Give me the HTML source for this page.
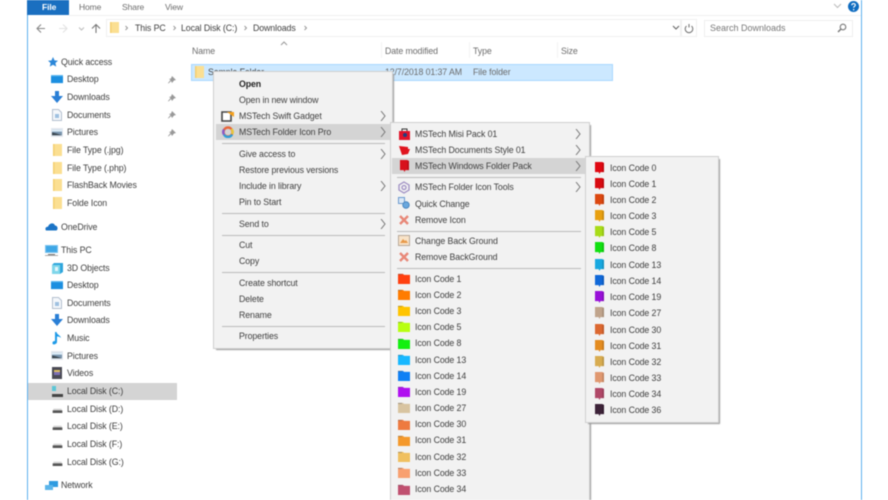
<!DOCTYPE html>
<html><head><meta charset="utf-8"><style>
html,body{margin:0;padding:0;width:888px;height:500px;overflow:hidden;background:#fff}
#r{position:relative;width:888px;height:500px;overflow:hidden;font:8.8px/16px "Liberation Sans",sans-serif;letter-spacing:-.1px;color:#404040;filter:blur(.45px)}
#r div,#r span,#r svg{position:absolute}
.t{white-space:nowrap;height:16px}
.g{color:#6c6c6c}
.m{background:#f2f2f2;box-shadow:2px 2px 1px #999;outline:1px solid #d0d0d0}
.s{height:1px;background:#bcbcbc}
.h{background:#d4d4d4}
.c{width:6px;height:10px;fill:none;stroke:#777;stroke-width:1}
.b{font-weight:bold;color:#222}
</style></head><body><div id="r">
<svg width="0" height="0"><defs>
<symbol id="fd" viewBox="0 0 12 12" preserveAspectRatio="none"><path d="M0 1h5l1 1h6v10H0z" fill="currentColor"/><path d="M0 1h4v1H0z" fill="#555" opacity=".45"/></symbol>
<symbol id="bk" viewBox="0 0 10 13" preserveAspectRatio="none"><path d="M0 0h8l2 1v10H6l-1 2-1-2H0z" fill="currentColor"/><path d="M8 1h2v10H8z" fill="#000" opacity=".12"/></symbol>
<symbol id="yf" viewBox="0 0 9 12" preserveAspectRatio="none"><path d="M0 0h9v12H0z" fill="#fbdf92"/><path d="M0 0h1.500v12H0z" fill="#f4cf70"/></symbol>
<symbol id="dr" viewBox="0 0 11 8"><path d="M1 3h9l1 3v2H0V6z" fill="#d8d8d8"/><path d="M0 5h11v3H0z" fill="#555"/></symbol>
<symbol id="ds" viewBox="0 0 12 10" preserveAspectRatio="none"><path d="M0 0h12v9H0z" fill="#1c8fe0"/><path d="M0 0h12v1.400H0z" fill="#60b8f0"/></symbol>
<symbol id="dn" viewBox="0 0 12 12"><path d="M4 0h4v5h4l-6 7-6-7h4z" fill="#2a7fd6"/></symbol>
<symbol id="dc" viewBox="0 0 10 12"><path d="M.5.500h6l3 3v8h-9z" fill="#f4f7fb" stroke="#b4c0cf"/><path d="M3 5h4v4H3z" fill="#9fc0e0"/></symbol>
<symbol id="pc" viewBox="0 0 12 10" preserveAspectRatio="none"><path d="M0 0h12v10H0z" fill="#e3e8ef"/><path d="M1 2h10v6H1z" fill="#7a95ae"/><path d="M1 5l4 1 6 2H1z" fill="#39454f"/><path d="M1 2h10v2H1z" fill="#dff0fb"/></symbol>
<symbol id="pn" viewBox="0 0 8 8"><path d="M4 0l4 4-2 .5L4 7 3 5 .5 7.500 0 7l2.500-3L1 3l2-.5z" fill="#999"/></symbol>
</defs></svg>

<!-- window borders -->
<div style="left:27px;top:0;width:1px;height:500px;background:#5cb0ee"></div>
<div style="left:861px;top:0;width:1px;height:500px;background:#5cb0ee"></div>

<!-- ribbon -->
<div style="left:27px;top:0;width:42px;height:15px;background:#1a6fc0"></div>
<div class="t" style="left:42px;top:-1px;color:#fff;font-weight:bold;font-size:8.500px">File</div>
<div class="t g" style="left:79px;top:-1px;font-size:8.500px">Home</div>
<div class="t g" style="left:122px;top:-1px;font-size:8.500px">Share</div>
<div class="t g" style="left:165px;top:-1px;font-size:8.500px">View</div>
<div style="left:69px;top:15px;width:792px;height:1px;background:#f0f0f0"></div>
<svg style="left:833px;top:3px" width="9" height="6"><path d="M1 1l3.500 3.500L8 1" fill="none" stroke="#bbb"/></svg>
<svg style="left:848px;top:1px" width="11" height="11"><circle cx="5.500" cy="5.500" r="5.500" fill="#0f6cc0"/><path d="M3.800 4.300c0-2.300 3.500-2.300 3.500-.2 0 1.200-1.700 1.300-1.700 2.600" fill="none" stroke="#fff" stroke-width="1.200"/><path d="M5 8h1.300v1.300H5z" fill="#fff"/></svg>

<!-- nav -->
<svg style="left:36px;top:23px" width="74" height="11" fill="none"><path d="M1 5.500h8M5 1.500l-4 4 4 4" stroke="#888" stroke-width="1.100"/><path d="M23 5.500h8M27 1.500l4 4-4 4" stroke="#e2e2e2" stroke-width="1.100"/><path d="M43 4.500l2.500 2.500L48 4.500" stroke="#bbb"/><path d="M60 10V2M56 5.500l4-4 4 4" stroke="#777" stroke-width="1.100"/></svg>
<div style="left:106px;top:19px;width:574px;height:16px;border:1px solid #f0f0f0"></div>
<div style="left:680px;top:19px;width:15px;height:16px;border:1px solid #f0f0f0"></div>
<svg style="left:110px;top:22px" width="9" height="11"><use href="#yf" width="9" height="11"/></svg>
<svg style="left:124px;top:24px" width="190" height="8" fill="none" stroke="#999"><path d="M1.500 2l2 2-2 2M49.500 2l2 2-2 2M120.500 2l2 2-2 2M180.500 2l2 2-2 2"/></svg>
<div class="t" style="left:135px;top:20px">This PC</div>
<div class="t" style="left:181px;top:20px">Local Disk (C:)</div>
<div class="t" style="left:253px;top:20px">Downloads</div>
<svg style="left:672px;top:25px" width="8" height="6"><path d="M1 1l3 3 3-3" fill="none" stroke="#666" stroke-width="1.100"/></svg>
<svg style="left:684px;top:23px" width="10" height="11"><path d="M2.500 3a3.800 3.800 0 1 0 5 0M5 1v3.500" fill="none" stroke="#777" stroke-width="1.100"/></svg>
<div style="left:704px;top:20px;width:147px;height:15px;border:1px solid #efefef"></div>
<div class="t" style="left:710px;top:20px;color:#777;font-size:9px;letter-spacing:0">Search Downloads</div>
<svg style="left:837px;top:23px" width="10" height="10"><circle cx="6" cy="4" r="2.800" fill="none" stroke="#777" stroke-width="1.100"/><path d="M4 6L1 9" stroke="#777" stroke-width="1.400"/></svg>

<!-- sidebar -->
<div class="h" style="left:28px;top:383px;width:149px;height:17px"></div>
<svg style="left:48px;top:57px" width="10" height="10"><path d="M5 0l1.500 3.400L10 3.700 7.400 6l.8 3.600L5 7.700 1.800 9.600 2.600 6 0 3.700l3.500-.3z" fill="#2b87d8"/></svg>
<div class="t" style="left:61px;top:54px">Quick access</div>
<svg style="left:51px;top:75px" width="12" height="9"><use href="#ds" width="12" height="9"/></svg><div class="t" style="left:67px;top:71px">Desktop</div>
<svg style="left:51px;top:91px" width="12" height="12"><use href="#dn" width="12" height="12"/></svg><div class="t" style="left:67px;top:89px">Downloads</div>
<svg style="left:52px;top:109px" width="10" height="12"><use href="#dc" width="10" height="12"/></svg><div class="t" style="left:67px;top:107px">Documents</div>
<svg style="left:51px;top:128px" width="12" height="9"><use href="#pc" width="12" height="9"/></svg><div class="t" style="left:67px;top:124px">Pictures</div>
<svg style="left:168px;top:76px" width="8" height="8"><use href="#pn" width="8" height="8"/></svg>
<svg style="left:168px;top:94px" width="8" height="8"><use href="#pn" width="8" height="8"/></svg>
<svg style="left:168px;top:111px" width="8" height="8"><use href="#pn" width="8" height="8"/></svg>
<svg style="left:168px;top:129px" width="8" height="8"><use href="#pn" width="8" height="8"/></svg>
<svg style="left:53px;top:144px" width="9" height="12"><use href="#yf" width="9" height="12"/></svg><div class="t" style="left:67px;top:142px">File Type (.jpg)</div>
<svg style="left:53px;top:162px" width="9" height="12"><use href="#yf" width="9" height="12"/></svg><div class="t" style="left:67px;top:160px">File Type (.php)</div>
<svg style="left:53px;top:179px" width="9" height="12"><use href="#yf" width="9" height="12"/></svg><div class="t" style="left:67px;top:177px">FlashBack Movies</div>
<svg style="left:53px;top:197px" width="9" height="12"><use href="#yf" width="9" height="12"/></svg><div class="t" style="left:67px;top:195px">Folde Icon</div>

<svg style="left:45px;top:222px" width="13" height="9"><path d="M1 8.500C-.500 6.500 1 4.500 3 4.800 4 1 9 0 10 3.500c2.500 0 3.500 3.500 1.500 5z" fill="#1b74c6"/></svg>
<div class="t" style="left:61px;top:219px">OneDrive</div>
<svg style="left:45px;top:245px" width="13" height="11"><path d="M0 0h13v8H0z" fill="#7cc4ee"/><path d="M1 1h11v6H1z" fill="#3fa7e6"/><path d="M3 9h7v1H3z" fill="#777"/><path d="M0 10h13v1H0z" fill="#aaa"/></svg>
<div class="t" style="left:61px;top:242px">This PC</div>
<svg style="left:51px;top:262px" width="12" height="12"><path d="M3 1h9v9l-3 2H1V3z" fill="#2fa6dc"/><path d="M1 3h8v9H1z" fill="#7fd6ea"/><path d="M4 5h3v4H4z" fill="#e4f6fb"/></svg>
<div class="t" style="left:67px;top:260px">3D Objects</div>
<svg style="left:51px;top:281px" width="12" height="9"><use href="#ds" width="12" height="9"/></svg><div class="t" style="left:67px;top:277px">Desktop</div>
<svg style="left:52px;top:297px" width="10" height="12"><use href="#dc" width="10" height="12"/></svg><div class="t" style="left:67px;top:295px">Documents</div>
<svg style="left:51px;top:314px" width="12" height="12"><use href="#dn" width="12" height="12"/></svg><div class="t" style="left:67px;top:312px">Downloads</div>
<svg style="left:52px;top:332px" width="10" height="13"><path d="M3 0h1.500c.5 3 4 3 4.500 6C7.500 4.500 6 4.500 5 4.500V10c0 2-4 3.500-4.500 1.500C.2 9.500 2 8.800 3 9z" fill="#1f9be8"/></svg>
<div class="t" style="left:67px;top:330px">Music</div>
<svg style="left:51px;top:351px" width="12" height="9"><use href="#pc" width="12" height="9"/></svg><div class="t" style="left:67px;top:348px">Pictures</div>
<svg style="left:52px;top:367px" width="10" height="12"><path d="M0 0h10v12H0z" fill="#4a4a55"/><path d="M2 3h6v5H2z" fill="#7d6fb5"/><path d="M2 3h6v2H2z" fill="#e0c060"/></svg>
<div class="t" style="left:67px;top:365px">Videos</div>
<svg style="left:51px;top:386px" width="12" height="11"><path d="M1 0h4v5H1z" fill="#5cc6d6"/><path d="M1 8h11v3H1z" fill="#444"/></svg>
<div class="t" style="left:67px;top:383px">Local Disk (C:)</div>
<svg style="left:52px;top:406px" width="11" height="7"><use href="#dr" width="11" height="7"/></svg><div class="t" style="left:67px;top:401px">Local Disk (D:)</div>
<svg style="left:52px;top:423px" width="11" height="7"><use href="#dr" width="11" height="7"/></svg><div class="t" style="left:67px;top:418px">Local Disk (E:)</div>
<svg style="left:52px;top:441px" width="11" height="7"><use href="#dr" width="11" height="7"/></svg><div class="t" style="left:67px;top:436px">Local Disk (F:)</div>
<svg style="left:52px;top:459px" width="11" height="7"><use href="#dr" width="11" height="7"/></svg><div class="t" style="left:67px;top:454px">Local Disk (G:)</div>
<svg style="left:45px;top:480px" width="13" height="11"><path d="M4 1h9v6H4z" fill="#2f9be0"/><path d="M0 5h8v5H0z" fill="#5bb5ea"/></svg>
<div class="t" style="left:61px;top:477px">Network</div>

<!-- file list -->
<svg style="left:280px;top:41px" width="8" height="5"><path d="M1 4l3-3 3 3" fill="none" stroke="#999"/></svg>
<div class="t g" style="left:192px;top:43px">Name</div>
<div class="t g" style="left:385px;top:43px">Date modified</div>
<div class="t g" style="left:473px;top:43px">Type</div>
<div class="t g" style="left:561px;top:43px">Size</div>
<div style="left:381px;top:42px;width:1px;height:16px;background:#f3f3f3"></div>
<div style="left:469px;top:42px;width:1px;height:16px;background:#f3f3f3"></div>
<div style="left:557px;top:42px;width:1px;height:16px;background:#f3f3f3"></div>
<div style="left:191px;top:64px;width:420px;height:15px;background:#cce8ff;border:1px solid #a8d8ff"></div>
<svg style="left:195px;top:66px" width="9" height="12"><use href="#yf" width="9" height="12"/></svg>
<div class="t" style="left:208px;top:64px">Sample Folder</div>
<div class="t g" style="left:385px;top:64px">12/7/2018 01:37 AM</div>
<div class="t g" style="left:473px;top:64px">File folder</div>

<!-- main menu -->
<div class="m" style="left:214px;top:72px;width:178px;height:276px"></div>
<div class="h" style="left:216px;top:124px;width:175px;height:16px"></div>
<div class="t b" style="left:239px;top:76px">Open</div>
<div class="t" style="left:239px;top:92px">Open in new window</div>
<div class="t" style="left:239px;top:108px">MSTech Swift Gadget</div>
<div class="t" style="left:239px;top:124px">MSTech Folder Icon Pro</div>
<div class="s" style="left:222px;top:143px;width:163px"></div>
<div class="t" style="left:239px;top:146px">Give access to</div>
<div class="t" style="left:239px;top:162px">Restore previous versions</div>
<div class="t" style="left:239px;top:178px">Include in library</div>
<div class="t" style="left:239px;top:194px">Pin to Start</div>
<div class="s" style="left:222px;top:213px;width:163px"></div>
<div class="t" style="left:239px;top:216px">Send to</div>
<div class="s" style="left:222px;top:235px;width:163px"></div>
<div class="t" style="left:239px;top:237px">Cut</div>
<div class="t" style="left:239px;top:253px">Copy</div>
<div class="s" style="left:222px;top:272px;width:163px"></div>
<div class="t" style="left:239px;top:275px">Create shortcut</div>
<div class="t" style="left:239px;top:291px">Delete</div>
<div class="t" style="left:239px;top:307px">Rename</div>
<div class="s" style="left:222px;top:326px;width:163px"></div>
<div class="t" style="left:239px;top:328px">Properties</div>
<svg class="c" style="left:380px;top:111px"><path d="M1 0l4 5-4 5"/></svg>
<svg class="c" style="left:380px;top:127px"><path d="M1 0l4 5-4 5"/></svg>
<svg class="c" style="left:380px;top:149px"><path d="M1 0l4 5-4 5"/></svg>
<svg class="c" style="left:380px;top:181px"><path d="M1 0l4 5-4 5"/></svg>
<svg class="c" style="left:380px;top:219px"><path d="M1 0l4 5-4 5"/></svg>
<svg style="left:221px;top:110px" width="13" height="12"><path d="M1 2h9v9H1z" fill="#fff" stroke="#444" stroke-width="1.600"/><path d="M6 2h7v5z" fill="#f5a11e"/></svg>
<svg style="left:222px;top:126px" width="12" height="12" fill="none" stroke-width="2.400"><circle cx="6" cy="6" r="4.500" stroke="#e8663a"/><path d="M2 8.500a4.500 4.500 0 0 0 8 0" stroke="#2f9fd8"/><path d="M9.500 3a4.500 4.500 0 0 1 .6 5" stroke="#e6c93a"/><path d="M2 3.500A4.500 4.500 0 0 0 2 8.500" stroke="#8a5bc8"/></svg>

<!-- submenu 1 -->
<div class="m" style="left:391px;top:123px;width:198px;height:400px"></div>
<div class="h" style="left:392px;top:158px;width:196px;height:16px"></div>
<div class="t" style="left:415px;top:126px">MSTech Misi Pack 01</div>
<div class="t" style="left:415px;top:142px">MSTech Documents Style 01</div>
<div class="t" style="left:415px;top:158px">MSTech Windows Folder Pack</div>
<div class="s" style="left:397px;top:177px;width:184px"></div>
<div class="t" style="left:415px;top:179px">MSTech Folder Icon Tools</div>
<div class="t" style="left:415px;top:196px">Quick Change</div>
<div class="t" style="left:415px;top:212px">Remove Icon</div>
<div class="s" style="left:397px;top:231px;width:184px"></div>
<div class="t" style="left:415px;top:233px">Change Back Ground</div>
<div class="t" style="left:415px;top:249px">Remove BackGround</div>
<div class="s" style="left:397px;top:268px;width:184px"></div>
<svg class="c" style="left:575px;top:129px"><path d="M1 0l4 5-4 5"/></svg>
<svg class="c" style="left:575px;top:145px"><path d="M1 0l4 5-4 5"/></svg>
<svg class="c" style="left:575px;top:161px"><path d="M1 0l4 5-4 5"/></svg>
<svg class="c" style="left:575px;top:182px"><path d="M1 0l4 5-4 5"/></svg>
<svg style="left:399px;top:128px" width="11" height="12"><path d="M0 3h11v9H0z" fill="#e0142a"/><path d="M3 3V1h5v2" fill="none" stroke="#333"/><circle cx="6" cy="7" r="2" fill="#1f3f80"/></svg>
<svg style="left:399px;top:146px" width="11" height="9"><path d="M0 0l9 1v2h2l-2 5-6 1-1-3z" fill="#e0141e"/></svg>
<svg style="left:400px;top:160px;color:#d8101c" width="9" height="12"><use href="#bk" width="9" height="12"/></svg>
<svg style="left:398px;top:181px" width="12" height="13" fill="none" stroke="#a090c4" stroke-width="1.300"><path d="M6 1l5 3v5l-5 3-5-3V4z"/><circle cx="6" cy="6.500" r="2"/></svg>
<svg style="left:398px;top:197px" width="12" height="12"><path d="M.5.500h6v6h-6z" fill="#dbe8f6" stroke="#6a9ad0"/><circle cx="8" cy="8" r="3.200" fill="#6aa8de" stroke="#4a86c0"/></svg>
<svg style="left:399px;top:215px" width="10" height="10"><path d="M1 1l8 8M9 1L1 9" stroke="#e88878" stroke-width="2.400"/></svg>
<svg style="left:398px;top:235px" width="12" height="11"><path d="M.5.500h11v10H.5z" fill="#f8e3c8" stroke="#b8a898"/><path d="M2 8l3-4 2 2 1-1 2 3z" fill="#e89a4a"/></svg>
<svg style="left:399px;top:252px" width="10" height="10"><path d="M1 1l8 8M9 1L1 9" stroke="#e88878" stroke-width="2.400"/></svg>

<svg style="left:398px;top:273px;color:#ff4010" width="12" height="11"><use href="#fd" width="12" height="11"/></svg><div class="t" style="left:415px;top:271px">Icon Code 1</div>
<svg style="left:398px;top:289px;color:#ff7c00" width="12" height="11"><use href="#fd" width="12" height="11"/></svg><div class="t" style="left:415px;top:287px">Icon Code 2</div>
<svg style="left:398px;top:305px;color:#ffc400" width="12" height="11"><use href="#fd" width="12" height="11"/></svg><div class="t" style="left:415px;top:303px">Icon Code 3</div>
<svg style="left:398px;top:321px;color:#b8ff10" width="12" height="11"><use href="#fd" width="12" height="11"/></svg><div class="t" style="left:415px;top:319px">Icon Code 5</div>
<svg style="left:398px;top:338px;color:#12f010" width="12" height="11"><use href="#fd" width="12" height="11"/></svg><div class="t" style="left:415px;top:335px">Icon Code 8</div>
<svg style="left:398px;top:354px;color:#18b8ff" width="12" height="11"><use href="#fd" width="12" height="11"/></svg><div class="t" style="left:415px;top:352px">Icon Code 13</div>
<svg style="left:398px;top:370px;color:#1080f4" width="12" height="11"><use href="#fd" width="12" height="11"/></svg><div class="t" style="left:415px;top:368px">Icon Code 14</div>
<svg style="left:398px;top:386px;color:#b010f0" width="12" height="11"><use href="#fd" width="12" height="11"/></svg><div class="t" style="left:415px;top:384px">Icon Code 19</div>
<svg style="left:398px;top:402px;color:#d8c4a0" width="12" height="11"><use href="#fd" width="12" height="11"/></svg><div class="t" style="left:415px;top:400px">Icon Code 27</div>
<svg style="left:398px;top:419px;color:#ee7a40" width="12" height="11"><use href="#fd" width="12" height="11"/></svg><div class="t" style="left:415px;top:416px">Icon Code 30</div>
<svg style="left:398px;top:435px;color:#f4992c" width="12" height="11"><use href="#fd" width="12" height="11"/></svg><div class="t" style="left:415px;top:432px">Icon Code 31</div>
<svg style="left:398px;top:451px;color:#f0c060" width="12" height="11"><use href="#fd" width="12" height="11"/></svg><div class="t" style="left:415px;top:449px">Icon Code 32</div>
<svg style="left:398px;top:467px;color:#f8a070" width="12" height="11"><use href="#fd" width="12" height="11"/></svg><div class="t" style="left:415px;top:465px">Icon Code 33</div>
<svg style="left:398px;top:484px;color:#c05070" width="12" height="11"><use href="#fd" width="12" height="11"/></svg><div class="t" style="left:415px;top:481px">Icon Code 34</div>

<!-- submenu 2 -->
<div class="m" style="left:586px;top:157px;width:132px;height:265px"></div>
<svg style="left:595px;top:162px;color:#e00812" width="9" height="12"><use href="#bk" width="9" height="12"/></svg><div class="t" style="left:610px;top:160px">Icon Code 0</div>
<svg style="left:595px;top:178px;color:#d80a10" width="9" height="12"><use href="#bk" width="9" height="12"/></svg><div class="t" style="left:610px;top:176px">Icon Code 1</div>
<svg style="left:595px;top:194px;color:#dc4810" width="9" height="12"><use href="#bk" width="9" height="12"/></svg><div class="t" style="left:610px;top:192px">Icon Code 2</div>
<svg style="left:595px;top:210px;color:#e8a010" width="9" height="12"><use href="#bk" width="9" height="12"/></svg><div class="t" style="left:610px;top:208px">Icon Code 3</div>
<svg style="left:595px;top:226px;color:#a8dc18" width="9" height="12"><use href="#bk" width="9" height="12"/></svg><div class="t" style="left:610px;top:224px">Icon Code 5</div>
<svg style="left:595px;top:242px;color:#10e010" width="9" height="12"><use href="#bk" width="9" height="12"/></svg><div class="t" style="left:610px;top:240px">Icon Code 8</div>
<svg style="left:595px;top:259px;color:#18a8e0" width="9" height="12"><use href="#bk" width="9" height="12"/></svg><div class="t" style="left:610px;top:257px">Icon Code 13</div>
<svg style="left:595px;top:275px;color:#1068d8" width="9" height="12"><use href="#bk" width="9" height="12"/></svg><div class="t" style="left:610px;top:273px">Icon Code 14</div>
<svg style="left:595px;top:291px;color:#9810d8" width="9" height="12"><use href="#bk" width="9" height="12"/></svg><div class="t" style="left:610px;top:289px">Icon Code 19</div>
<svg style="left:595px;top:307px;color:#c0a48c" width="9" height="12"><use href="#bk" width="9" height="12"/></svg><div class="t" style="left:610px;top:305px">Icon Code 27</div>
<svg style="left:595px;top:324px;color:#dc6830" width="9" height="12"><use href="#bk" width="9" height="12"/></svg><div class="t" style="left:610px;top:322px">Icon Code 30</div>
<svg style="left:595px;top:340px;color:#e48c20" width="9" height="12"><use href="#bk" width="9" height="12"/></svg><div class="t" style="left:610px;top:338px">Icon Code 31</div>
<svg style="left:595px;top:356px;color:#d8ac50" width="9" height="12"><use href="#bk" width="9" height="12"/></svg><div class="t" style="left:610px;top:354px">Icon Code 32</div>
<svg style="left:595px;top:372px;color:#e09870" width="9" height="12"><use href="#bk" width="9" height="12"/></svg><div class="t" style="left:610px;top:370px">Icon Code 33</div>
<svg style="left:595px;top:388px;color:#b04868" width="9" height="12"><use href="#bk" width="9" height="12"/></svg><div class="t" style="left:610px;top:386px">Icon Code 34</div>
<svg style="left:595px;top:404px;color:#3c2238" width="9" height="12"><use href="#bk" width="9" height="12"/></svg><div class="t" style="left:610px;top:402px">Icon Code 36</div>
</div></body></html>
